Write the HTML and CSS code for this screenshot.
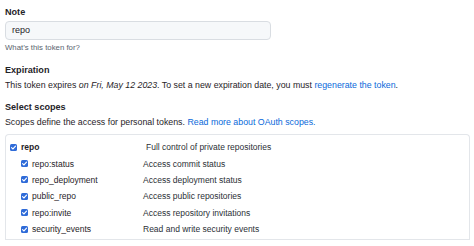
FILE: index.html
```html
<!DOCTYPE html>
<html>
<head>
<meta charset="utf-8">
<link rel="stylesheet" href="styles.css">
</head>
<body>
<div class="page">
  <section class="field note-field">
    <div class="label">Note</div>
    <div class="input">repo</div>
    <div class="hint">What’s this token for?</div>
  </section>
  <section class="field expiration">
    <div class="label">Expiration</div>
    <p class="text">This token expires <em>on Fri, May 12 2023</em>. To set a new expiration date, you must <a class="link">regenerate the token</a>.</p>
  </section>
  <section class="field scopes">
    <div class="label">Select scopes</div>
    <p class="text">Scopes define the access for personal tokens. <a class="link">Read more about OAuth scopes.</a></p>
  </section>
  <div class="scope-box">
    <div class="row parent">
      <span class="name"><span class="cb"><svg viewBox="0 0 8 8"><path d="M1.8 4.2 L3.4 5.7 L6.3 2.4" /></svg></span><b>repo</b></span>
      <span class="desc">Full control of private repositories</span>
    </div>
    <div class="row child">
      <span class="name"><span class="cb"><svg viewBox="0 0 8 8"><path d="M1.8 4.2 L3.4 5.7 L6.3 2.4" /></svg></span>repo:status</span>
      <span class="desc">Access commit status</span>
    </div>
    <div class="row child">
      <span class="name"><span class="cb"><svg viewBox="0 0 8 8"><path d="M1.8 4.2 L3.4 5.7 L6.3 2.4" /></svg></span>repo_deployment</span>
      <span class="desc">Access deployment status</span>
    </div>
    <div class="row child">
      <span class="name"><span class="cb"><svg viewBox="0 0 8 8"><path d="M1.8 4.2 L3.4 5.7 L6.3 2.4" /></svg></span>public_repo</span>
      <span class="desc">Access public repositories</span>
    </div>
    <div class="row child">
      <span class="name"><span class="cb"><svg viewBox="0 0 8 8"><path d="M1.8 4.2 L3.4 5.7 L6.3 2.4" /></svg></span>repo:invite</span>
      <span class="desc">Access repository invitations</span>
    </div>
    <div class="row child">
      <span class="name"><span class="cb"><svg viewBox="0 0 8 8"><path d="M1.8 4.2 L3.4 5.7 L6.3 2.4" /></svg></span>security_events</span>
      <span class="desc">Read and write security events</span>
    </div>
    <div class="sep"></div>
  </div>
</div>
</body>
</html>
```

FILE: styles.css
```css
html, body {
  margin: 0;
  padding: 0;
  background: #ffffff;
  overflow: hidden;
}
body {
  font-family: "Liberation Sans", Arial, sans-serif;
  font-size: 8.8px;
  color: #1f2328;
}
.page {
  padding: 6px 5px 0 5px;
  width: 465px;
}
.label {
  font-weight: bold;
  font-size: 9.1px;
  line-height: 12px;
}
.input {
  margin-top: 3px;
  width: 258px;
  height: 17px;
  border: 1px solid #d9dde2;
  border-radius: 4px;
  background: #f6f8fa;
  padding: 0 0 0 6px;
  line-height: 17px;
  font-size: 9px;
}
.hint {
  margin-top: 2px;
  font-size: 7.8px;
  line-height: 11px;
  color: #59636e;
}
.expiration {
  margin-top: 11px;
}
.text {
  margin: 3px 0 0 0;
  line-height: 12px;
  font-size: 8.8px;
}
.text em {
  font-style: italic;
}
.link {
  color: #0969da;
  text-decoration: none;
}
.scopes {
  margin-top: 10px;
}
.scope-box {
  margin-top: 6px;
  width: 463px;
  border: 1px solid #e3e6ea;
  border-bottom: none;
  border-radius: 4px 4px 0 0;
  padding-top: 4px;
}
.row {
  display: flex;
  align-items: center;
  height: 16.4px;
  font-size: 8.5px;
}
.name {
  display: flex;
  align-items: center;
}
.parent .name {
  padding-left: 4px;
  width: 136px;
}
.child .name {
  padding-left: 15px;
  width: 122px;
}
.cb {
  width: 7px;
  height: 7px;
  border-radius: 1.5px;
  background: #2f6bd8;
  margin-right: 4px;
  display: inline-flex;
}
.cb svg {
  width: 7px;
  height: 7px;
  fill: none;
  stroke: #ffffff;
  stroke-width: 1.3;
  stroke-linecap: round;
  stroke-linejoin: round;
}
.parent b {
  font-weight: bold;
}
.desc {
  color: #2b3036;
}
.sep {
  margin-top: 2px;
  height: 1px;
  background: #e3e6ea;
}
```
